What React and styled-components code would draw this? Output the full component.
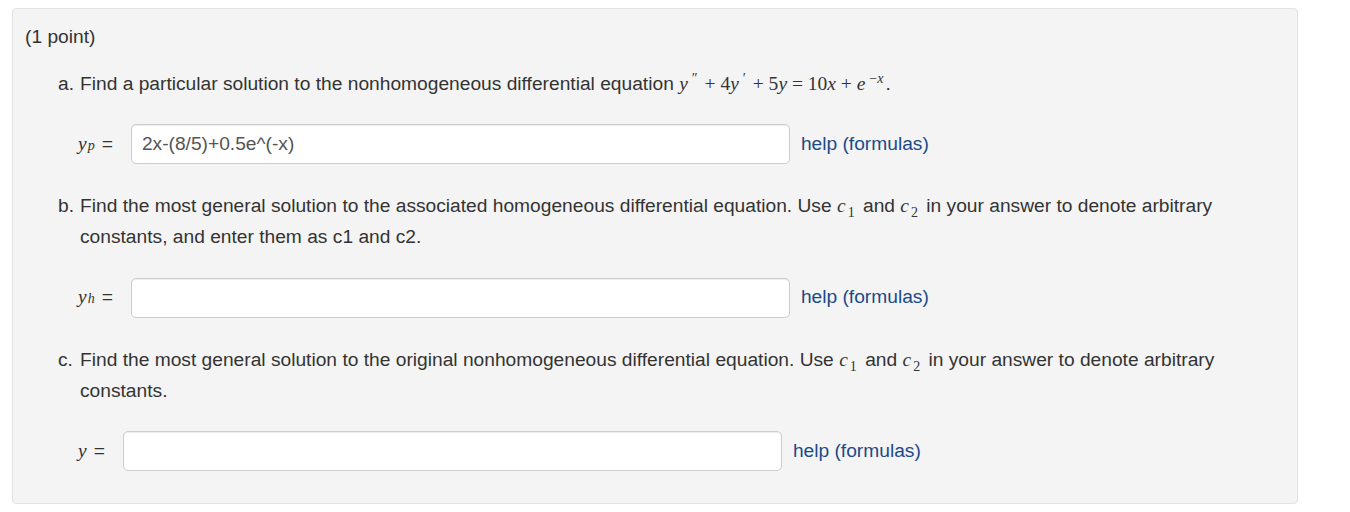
import React from 'react'
import styled, { createGlobalStyle } from 'styled-components'

const GlobalStyle = createGlobalStyle`
  body {
    margin: 0;
    background: #ffffff;
    font-family: "Liberation Sans", Arial, sans-serif;
    color: #333333;
  }
`

function AnswerRow({ sub, value, last }) {
    return (
        <Row $last={last}>
            <Label>
                <Var>y</Var>
                {sub && <LabelSub>{sub}</LabelSub>}
                <Eq>=</Eq>
            </Label>
            <Input defaultValue={value || ''} />
            <Help href="#">help (formulas)</Help>
        </Row>
    )
}

function C({ n }) {
    return (
        <MathText>
            <Var>c</Var>
            <Sub>{n}</Sub>
        </MathText>
    )
}

function App() {
    return (
        <>
            <GlobalStyle />
            <Panel>
                <Points>(1 point)</Points>

                <Item>
                    <Marker>a.</Marker>
                    <Content>
                        Find a particular solution to the nonhomogeneous differential equation{' '}
                        <MathText>
                            <Var>y</Var><Sup>″</Sup> + 4<Var>y</Var><Sup>′</Sup> + 5<Var>y</Var> = 10<Var>x</Var> + <Var>e</Var>
                            <Sup>−<Var>x</Var></Sup>
                        </MathText>.
                    </Content>
                </Item>
                <AnswerRow sub="p" value="2x-(8/5)+0.5e^(-x)" />

                <Item>
                    <Marker>b.</Marker>
                    <Content>
                        Find the most general solution to the associated homogeneous differential equation. Use{' '}
                        <C n="1" /> and <C n="2" /> in your answer to denote arbitrary
                        constants, and enter them as c1 and c2.
                    </Content>
                </Item>
                <AnswerRow sub="h" />

                <Item>
                    <Marker>c.</Marker>
                    <Content>
                        Find the most general solution to the original nonhomogeneous differential equation. Use{' '}
                        <C n="1" /> and <C n="2" /> in your answer to denote arbitrary
                        constants.
                    </Content>
                </Item>
                <AnswerRow last />
            </Panel>
        </>
    )
}

export default App


const Panel = styled.div`
    box-sizing: border-box;
    width: 1286px;
    margin: 8px 0 0 12px;
    padding: 13px 12px 32px 12px;
    background: #f4f4f4;
    border: 1px solid #e3e3e3;
    border-radius: 4px;
    font-size: 19.2px;
    line-height: 30.7px;
`

const Points = styled.div`
    margin-bottom: 16px;
`

const Item = styled.div`
    display: flex;
    margin-left: 33px;
    width: 1160px;
`

const Marker = styled.span`
    flex: 0 0 22px;
`

const Content = styled.div`
    flex: 1;
`

const MathText = styled.span`
    font-family: "Liberation Serif", "Times New Roman", serif;
    font-size: 19.5px;
    white-space: nowrap;
`

const Var = styled.i`
    font-family: "Liberation Serif", "Times New Roman", serif;
    font-style: italic;
    font-size: 19.5px;
`

const Sup = styled.sup`
    font-size: 14px;
    vertical-align: 7px;
    line-height: 0;
    margin-left: 4px;
    margin-right: 2px;

    i {
        font-size: 14px;
    }
`

const Sub = styled.sub`
    font-family: "Liberation Serif", "Times New Roman", serif;
    font-size: 14px;
    vertical-align: -5px;
    line-height: 0;
    margin-left: 2px;
    margin-right: 3px;
`

const LabelSub = styled(Sub)`
    font-style: italic;
    vertical-align: -6px;
    margin-left: 1px;
    margin-right: 0;
`

const Row = styled.div`
    display: flex;
    align-items: center;
    margin: 25px 0 ${p => (p.$last ? '0' : '27px')} 53px;
`

const Label = styled.span`
    display: inline-flex;
    align-items: baseline;
    margin-right: 18px;
    white-space: nowrap;
`

const Eq = styled.span`
    margin-left: 7px;
`

const Input = styled.input`
    box-sizing: border-box;
    width: 659px;
    height: 40px;
    padding: 0 10px;
    border: 1px solid #cccccc;
    border-radius: 5px;
    background: #ffffff;
    font-family: "Liberation Sans", Arial, sans-serif;
    font-size: 19.2px;
    color: #555555;
    box-shadow: inset 0 1px 1px rgba(0, 0, 0, 0.075);
    outline: none;
`

const Help = styled.a`
    margin-left: 11px;
    color: #1b4a89;
    text-decoration: none;
`
